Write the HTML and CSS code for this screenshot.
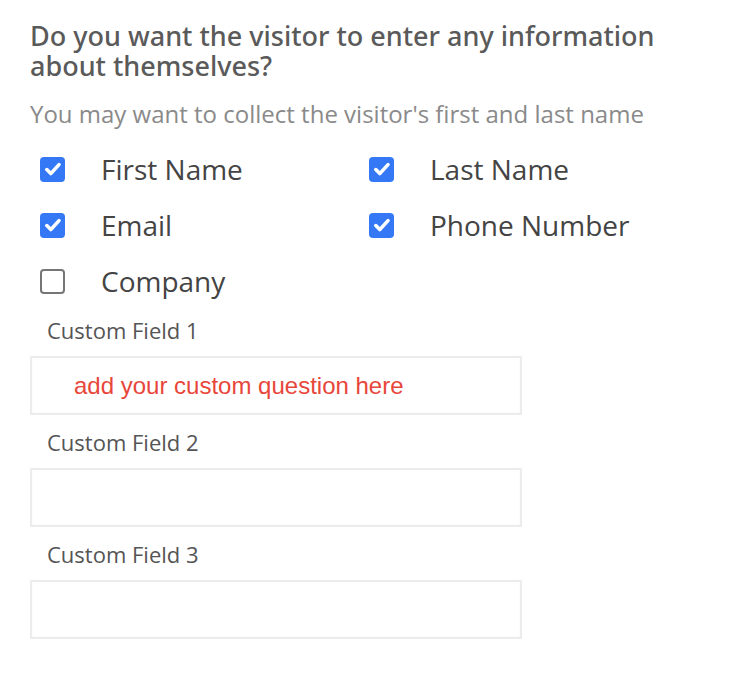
FILE: index.html
```html
<!DOCTYPE html>
<html>
<head>
<meta charset="utf-8">
<link rel="stylesheet" href="styles.css">
</head>
<body>
<div class="page">
  <h1 class="title">Do you want the visitor to enter any information about themselves?</h1>
  <p class="subtitle">You may want to collect the visitor's first and last name</p>
  <div class="checks">
    <label class="check"><span class="box on"><svg viewBox="0 0 24 24" width="24" height="24"><path d="M5.8 12.6l4 4 8.2-9" fill="none" stroke="#fff" stroke-width="3.6" stroke-linecap="round" stroke-linejoin="round"/></svg></span><span class="lbl">First Name</span></label>
    <label class="check"><span class="box on"><svg viewBox="0 0 24 24" width="24" height="24"><path d="M5.8 12.6l4 4 8.2-9" fill="none" stroke="#fff" stroke-width="3.6" stroke-linecap="round" stroke-linejoin="round"/></svg></span><span class="lbl">Last Name</span></label>
    <label class="check"><span class="box on"><svg viewBox="0 0 24 24" width="24" height="24"><path d="M5.8 12.6l4 4 8.2-9" fill="none" stroke="#fff" stroke-width="3.6" stroke-linecap="round" stroke-linejoin="round"/></svg></span><span class="lbl">Email</span></label>
    <label class="check"><span class="box on"><svg viewBox="0 0 24 24" width="24" height="24"><path d="M5.8 12.6l4 4 8.2-9" fill="none" stroke="#fff" stroke-width="3.6" stroke-linecap="round" stroke-linejoin="round"/></svg></span><span class="lbl">Phone Number</span></label>
    <label class="check"><span class="box off"></span><span class="lbl">Company</span></label>
  </div>
  <div class="field first">
    <div class="flabel">Custom Field 1</div>
    <div class="input"><span class="ph">add your custom question here</span></div>
  </div>
  <div class="field">
    <div class="flabel">Custom Field 2</div>
    <div class="input"></div>
  </div>
  <div class="field">
    <div class="flabel">Custom Field 3</div>
    <div class="input"></div>
  </div>
</div>
</body>
</html>
```
FILE: styles.css
```css
html, body { margin: 0; padding: 0; background: #fff; }
.page { padding: 21px 0 0 30px; font-family: "Open Sans", "Noto Sans", sans-serif; }
.title {
  margin: 0;
  font-family: "Noto Sans", "Open Sans", sans-serif;
  font-weight: 500;
  font-size: 27px;
  line-height: 30px;
  color: #5a5a5a;
  width: 650px;
}
.subtitle {
  margin: 18px 0 0 0;
  font-size: 24px;
  line-height: 30px;
  color: #8a8a8a;
}
.checks {
  display: grid;
  grid-template-columns: 329px 329px;
  row-gap: 24px;
  margin-top: 24px;
  padding-left: 10px;
}
.check { display: flex; align-items: center; height: 32px; }
.box {
  box-sizing: border-box;
  width: 25px; height: 25px;
  border-radius: 4px;
  flex: none;
  display: flex; align-items: center; justify-content: center;
}
.box.on { background: #3478f6; }
.box.off { border: 2px solid #767676; background: #fff; }
.lbl { margin-left: 36px; font-size: 28px; color: #444; line-height: 32px; }
.field { margin-top: 13px; }
.field.first { margin-top: 19px; }
.flabel { padding-left: 17px; font-size: 22px; line-height: 28px; color: #555; }
.input {
  box-sizing: border-box;
  margin-top: 12px;
  width: 492px; height: 59px;
  border: 2px solid #ececec;
  box-shadow: inset 0 0 2px rgba(0,0,0,0.05);
  display: flex; align-items: center;
  padding-left: 42px;
}
.ph { font-family: "Liberation Sans", Arial, sans-serif; font-size: 24px; color: #e8463a; }
```
